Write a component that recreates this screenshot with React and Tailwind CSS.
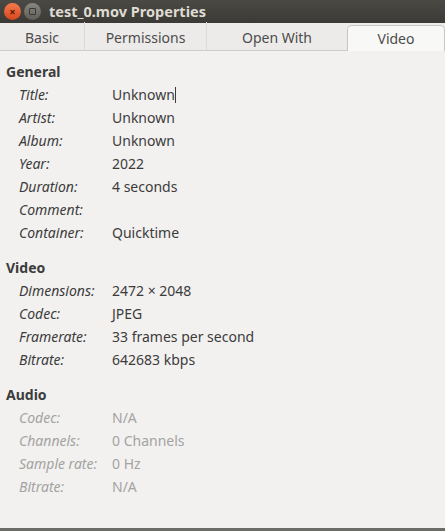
import React from 'react';

const sections = [
  {
    title: 'General',
    dim: false,
    rows: [
      ['Title:', 'Unknown', true],
      ['Artist:', 'Unknown'],
      ['Album:', 'Unknown'],
      ['Year:', '2022'],
      ['Duration:', '4 seconds'],
      ['Comment:', ''],
      ['Container:', 'Quicktime'],
    ],
  },
  {
    title: 'Video',
    dim: false,
    rows: [
      ['Dimensions:', '2472 × 2048'],
      ['Codec:', 'JPEG'],
      ['Framerate:', '33 frames per second'],
      ['Bitrate:', '642683 kbps'],
    ],
  },
  {
    title: 'Audio',
    dim: true,
    rows: [
      ['Codec:', 'N/A'],
      ['Channels:', '0 Channels'],
      ['Sample rate:', '0 Hz'],
      ['Bitrate:', 'N/A'],
    ],
  },
];

const tabs = [
  { name: 'Basic', w: 'w-[84px]' },
  { name: 'Permissions', w: 'w-[122px]' },
  { name: 'Open With', w: 'w-[141px]' },
];

const App = () => {
  return (
    <div
      className="w-[445px] h-[531px] flex flex-col bg-[#f2f1f0] text-[14px] text-[#3c3c3c] overflow-hidden"
      style={{ fontFamily: '"Noto Sans", "DejaVu Sans", sans-serif' }}
    >
      {/* title bar */}
      <div className="h-[23px] flex items-center bg-gradient-to-b from-[#4a4944] to-[#3b3a36] px-[4px]">
        <div className="w-[17px] h-[17px] rounded-full bg-gradient-to-b from-[#f37a4c] to-[#d9451b] flex items-center justify-center text-[#5a1a06] text-[11px] leading-none font-bold">
          ×
        </div>
        <div className="ml-[3px] w-[17px] h-[17px] rounded-full bg-gradient-to-b from-[#87867f] to-[#5f5e58] flex items-center justify-center">
          <div className="w-[7px] h-[7px] border border-[#3a3935] rounded-[1px]" />
        </div>
        <div className="ml-[8px] text-[#dfdbd2] font-bold text-[14.5px] leading-none">test_0.mov Properties</div>
      </div>

      {/* tabs */}
      <div className="h-[28px] flex items-end bg-[#ecebe9] border-b border-[#cfcdca]">
        {tabs.map((t, i) => (
          <div
            key={t.name}
            className={`${t.w} h-[28px] flex items-center justify-center pt-[2px] text-[#4c4c4c] ${i > 0 ? 'border-l border-[#dcdad7]' : ''}`}
          >
            {t.name}
          </div>
        ))}
        <div className="flex-1 h-[26px] mb-[-1px] flex items-center justify-center bg-[#f8f8f7] border border-b-0 border-[#c8c6c2] rounded-t-[5px] text-[#4c4c4c]">
          Video
        </div>
      </div>

      {/* content */}
      <div className="flex flex-col pt-[9px] pl-[6px]">
        {sections.map((s) => (
          <div key={s.title} className="mb-[12px]">
            <div className="h-[23px] flex items-center font-bold text-[#3c3c3c]">{s.title}</div>
            {s.rows.map(([label, value, cursor]) => (
              <div key={label} className={`h-[23px] flex items-center ${s.dim ? 'text-[#a3a3a1]' : 'text-[#3c3c3c]'}`}>
                <span className="w-[106px] pl-[13px] italic">{label}</span>
                <span className="flex items-center">
                  {value}
                  {cursor && <span className="inline-block w-[1px] h-[16px] bg-[#3c3c3c]" />}
                </span>
              </div>
            ))}
          </div>
        ))}
      </div>

      <div className="mt-auto h-[3px] bg-[#6c6b68]" />
    </div>
  );
};

export default App;
